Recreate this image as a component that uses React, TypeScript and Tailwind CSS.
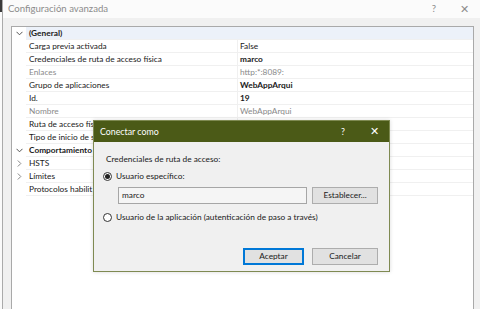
import React from "react";

const F = { fontFamily: 'Lato, "Noto Sans", sans-serif' };

type Row = {
  kind: "cat" | "item";
  label: string;
  value?: string;
  chevron?: "down" | "right";
  bold?: boolean;
  gray?: boolean;
  sel?: boolean;
};

const rows: Row[] = [
  { kind: "cat", label: "(General)", chevron: "down", sel: true },
  { kind: "item", label: "Carga previa activada", value: "False" },
  { kind: "item", label: "Credenciales de ruta de acceso física", value: "marco", bold: true },
  { kind: "item", label: "Enlaces", value: "http:*:8089:", gray: true },
  { kind: "item", label: "Grupo de aplicaciones", value: "WebAppArqui", bold: true },
  { kind: "item", label: "Id.", value: "19", bold: true },
  { kind: "item", label: "Nombre", value: "WebAppArqui", gray: true },
  { kind: "item", label: "Ruta de acceso fís", value: "" },
  { kind: "item", label: "Tipo de inicio de s", value: "" },
  { kind: "cat", label: "Comportamiento", chevron: "down" },
  { kind: "item", label: "HSTS", chevron: "right", value: "" },
  { kind: "item", label: "Límites", chevron: "right", value: "" },
  { kind: "item", label: "Protocolos habilit", value: "" },
];

function Chevron({ dir }: { dir: "down" | "right" }) {
  return dir === "down" ? (
    <svg width="7" height="5" viewBox="0 0 7 5">
      <path d="M0.5 0.8 L3.5 3.8 L6.5 0.8" fill="none" stroke="#555" strokeWidth="1" />
    </svg>
  ) : (
    <svg width="5" height="7" viewBox="0 0 5 7">
      <path d="M0.8 0.5 L3.8 3.5 L0.8 6.5" fill="none" stroke="#888" strokeWidth="1" />
    </svg>
  );
}

function Radio({ checked }: { checked?: boolean }) {
  return (
    <span className="w-[9px] h-[9px] rounded-full border border-[#333] bg-white flex items-center justify-center shrink-0">
      {checked && <span className="w-[5px] h-[5px] rounded-full bg-[#222]" />}
    </span>
  );
}

export default function App() {
  return (
    <div className="w-[480px] h-[309px] bg-[#f0f0f0] relative overflow-hidden flex text-[8.3px] text-[#1a1a1a]" style={F}>
      {/* strip of window behind */}
      <div className="w-[2px] flex flex-col">
        <div className="h-[12px] bg-[#3a3a3a]" />
        <div className="flex-1 bg-[#fafafa]" />
      </div>
      {/* main window */}
      <div className="flex-1 flex flex-col border-l border-[#aaaaaa]">
        <div className="h-[18px] bg-[#fbfbfb] flex items-center pl-[5px] text-[#8c8c8c] text-[9.6px]">
          <span className="flex-1 leading-none">Configuración avanzada</span>
          <span className="w-[20px] text-center mr-[10px]">?</span>
          <span className="w-[20px] text-center mr-[6px] text-[11px] font-light">✕</span>
        </div>
        <div className="flex-1 pl-[8px] pt-[8px] pr-[6px] flex">
          <div className="flex-1 bg-white border border-[#a9a9a9] border-b-0">
            {rows.map((r, i) => (
              <div key={i} className="flex h-[13px] leading-[13px]">
                <div className="w-[14px] flex items-center justify-center shrink-0 pl-[1px]">
                  {r.chevron && <Chevron dir={r.chevron} />}
                </div>
                {r.kind === "cat" ? (
                  <div className={`flex-1 pl-[3px] font-bold border-b border-[#f0f0f0] ${r.sel ? "bg-[#ecf1f9]" : ""}`}>
                    {r.label}
                  </div>
                ) : (
                  <>
                    <div className={`w-[211px] shrink-0 pl-[3px] border-b border-[#f0f0f0] whitespace-nowrap overflow-hidden ${r.gray ? "text-[#8a8a8a]" : ""}`}>
                      {r.label}
                    </div>
                    <div className={`flex-1 pl-[2px] border-b border-l border-[#f0f0f0] whitespace-nowrap ${r.bold ? "font-bold" : ""} ${r.gray ? "text-[#8a8a8a]" : ""}`}>
                      {r.value}
                    </div>
                  </>
                )}
              </div>
            ))}
          </div>
        </div>
      </div>

      {/* Conectar como dialog */}
      <div className="absolute left-[93px] top-[120px] w-[297px] h-[152px] border border-[#7f8a52] bg-[#f0f0f0] flex flex-col shadow-[0_0_4px_rgba(0,0,0,0.15)]">
        <div className="h-[21px] bg-[#4b5a17] flex items-center pl-[6px] text-white text-[8.8px]">
          <span className="flex-1">Conectar como</span>
          <span className="w-[14px] text-center mr-[17px]">?</span>
          <span className="w-[14px] text-center mr-[8px] text-[11px]">✕</span>
        </div>
        <div className="flex-1 flex flex-col pl-[9px] pr-[11px]">
          <div className="mt-[11px] h-[13px] leading-[13px] pl-[3px]">Credenciales de ruta de acceso:</div>
          <div className="mt-[4px] h-[12px] flex items-center gap-[4px]">
            <Radio checked />
            <span>Usuario específico:</span>
          </div>
          <div className="mt-[5px] flex pl-[15px] gap-[5px]">
            <div className="w-[190px] h-[17px] bg-[#f5f5f5] border border-[#a6a6a6] pl-[3px] leading-[15px]">marco</div>
            <div className="w-[66px] h-[17px] bg-[#e1e1e1] border border-[#adadad] flex items-center justify-center">Establecer...</div>
          </div>
          <div className="mt-[7px] h-[12px] flex items-center gap-[4px]">
            <Radio />
            <span>Usuario de la aplicación (autenticación de paso a través)</span>
          </div>
          <div className="mt-[25px] flex justify-end gap-[8px]">
            <div className="w-[61px] h-[17px] bg-[#e1e1e1] border border-[#0078d7] outline outline-1 outline-[#0078d7] -outline-offset-2 flex items-center justify-center">Aceptar</div>
            <div className="w-[66px] h-[17px] bg-[#e1e1e1] border border-[#adadad] flex items-center justify-center">Cancelar</div>
          </div>
        </div>
      </div>
    </div>
  );
}
